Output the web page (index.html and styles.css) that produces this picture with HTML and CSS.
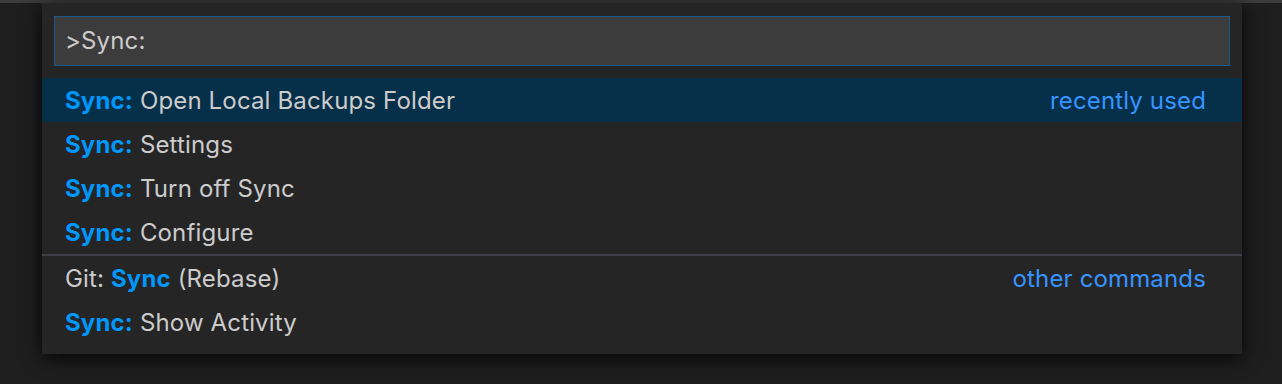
FILE: index.html
```html
<!DOCTYPE html>
<html>
<head>
<meta charset="utf-8">
<link rel="stylesheet" href="styles.css">
</head>
<body>
<div class="topbar"></div>
<div class="stage">
  <div class="palette">
    <div class="input">&gt;Sync:</div>
    <div class="list">
      <div class="row selected"><span class="label"><b>Sync:</b> Open Local Backups Folder</span><span class="desc">recently used</span></div>
      <div class="row"><span class="label"><b>Sync:</b> Settings</span></div>
      <div class="row"><span class="label"><b>Sync:</b> Turn off Sync</span></div>
      <div class="row"><span class="label"><b>Sync:</b> Configure</span></div>
      <div class="row sep"><span class="label">Git: <b>Sync</b> (Rebase)</span><span class="desc">other commands</span></div>
      <div class="row"><span class="label"><b>Sync:</b> Show Activity</span></div>
    </div>
  </div>
</div>
</body>
</html>
```
FILE: styles.css
```css
html, body {
  margin: 0;
  padding: 0;
  background: #1e1e1e;
  width: 1282px;
  height: 384px;
  overflow: hidden;
  font-family: Inter, "Noto Sans", sans-serif;
}
.topbar {
  height: 3px;
  background: #3c3c3c;
}
.stage {
  padding-left: 42px;
}
.palette {
  width: 1200px;
  background: #252526;
  box-shadow: 0 4px 18px rgba(0, 0, 0, 0.85);
  padding: 13px 0 10px;
  box-sizing: border-box;
}
.input {
  margin: 0 12px;
  height: 50px;
  box-sizing: border-box;
  border: 1px solid #1b5a8a;
  background: #3c3c3c;
  color: #cccccc;
  font-size: 24px;
  letter-spacing: 0.15px;
  line-height: 48px;
  padding-left: 10px;
}
.list {
  margin-top: 12px;
}
.row {
  height: 44px;
  display: flex;
  align-items: center;
  justify-content: space-between;
  padding: 0 36px 0 23px;
  color: #cccccc;
  font-size: 24px;
  letter-spacing: 0.15px;
}
.row b {
  color: #0097fb;
  font-weight: 700;
}
.row.selected {
  background: #062f4a;
}
.row.sep {
  border-top: 2px solid #3f3f46;
}
.desc {
  color: #3794ff;
}
```
